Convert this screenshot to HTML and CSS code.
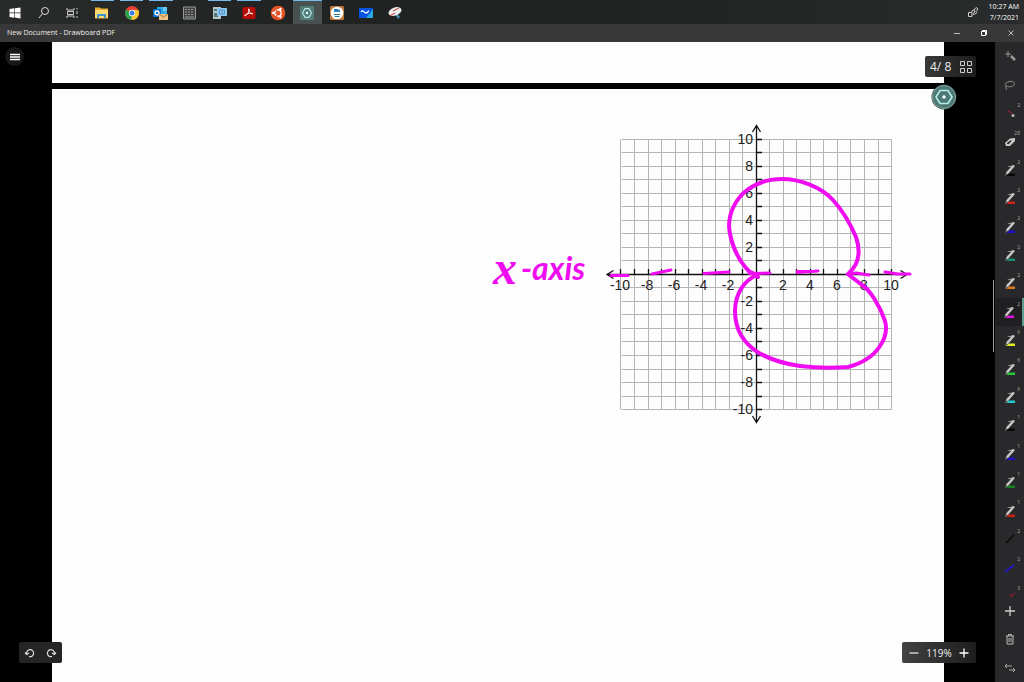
FILE: index.html
```html
<!DOCTYPE html>
<html lang="en">
<head>
<meta charset="utf-8">
<title>New Document - Drawboard PDF</title>
<link rel="stylesheet" href="styles.css">
</head>
<body>
<svg class="defs" aria-hidden="true">
  <symbol id="pen" viewBox="0 0 14 14"><path d="M3 13h9v-2.500H6z" fill="currentColor"/><path d="M4 3.500 11.500 2 6 9.500 2 13 4 8 8 4.500z" fill="#999"/><path d="M11 2.500 4 10.500" stroke="#c8c8c8" stroke-width="2"/></symbol>
</svg>
<header class="taskbar">
  <nav class="apps" aria-label="Taskbar">
    <button class="app" aria-label="Start"><svg viewBox="0 0 16 16"><path d="M2.500 4 7.300 3.300v4.300H2.500zM7.900 3.200 13.500 2.400v5.200H7.900zM2.500 8.200h4.800v4.500l-4.800-.7zM7.900 8.200h5.600v5.200l-5.600-.8z" fill="#fff"/></svg></button>
    <button class="app" aria-label="Search"><svg viewBox="0 0 16 16" fill="none" stroke="#ddd"><circle cx="9" cy="6" r="3.500"/><path d="M6.400 8.500 3 13"/></svg></button>
    <button class="app" aria-label="Task view"><svg viewBox="0 0 16 16" fill="none" stroke="#ccc"><path d="M2 3v2h7V3M2 13v-2h7v2M2.500 6.500h6v3h-6zM12 3v1.500M12 6v3M12 11v2"/></svg></button>
    <button class="app open" aria-label="File Explorer"><svg viewBox="0 0 16 16"><path d="M1 2.500h5l1 1h7v10H1z" fill="#e9ae32"/><path d="M1 5h13v8H1z" fill="#ffdc72"/><path d="M3 13V9h9v4h-2v-2H5v2z" fill="#3f91cf"/></svg></button>
    <button class="app open" aria-label="Chrome"><svg viewBox="0 0 16 16"><circle cx="8" cy="8" r="7" fill="#e64235"/><path d="M8 8 2 4.500A7 7 0 0 0 7.500 15L10.700 9.500z" fill="#2ba24c"/><path d="M8 5h6.300A7 7 0 0 1 7.500 15z" fill="#fcc934"/><circle cx="8" cy="8" r="3.200" fill="#fff"/><circle cx="8" cy="8" r="2.500" fill="#3d7de8"/></svg></button>
    <button class="app open" aria-label="Outlook"><svg viewBox="0 0 16 16"><path d="M4 2h10v8H4z" fill="#35a9e8"/><path d="M10 2h4v4h-4z" fill="#67cdf7"/><path d="M0 4h8v8H0z" fill="#0872c8"/><circle cx="4" cy="8" r="2" fill="none" stroke="#fff" stroke-width="1.300"/><path d="M6 9h9v6H6z" fill="#f3c385"/><path d="m6 9 4.500 3L15 9" fill="none" stroke="#a77945"/></svg></button>
    <button class="app" aria-label="Keyboard"><svg viewBox="0 0 16 16" fill="none" stroke="#999"><path d="M1.500 2h12v12h-12z" fill="#414343"/><path d="M3 4.500h9M3 7h9M3 9.500h9" stroke-dasharray="2 1"/><path d="M3 12h9"/></svg></button>
    <button class="app open" aria-label="Scanner"><svg viewBox="0 0 16 16"><path d="M1 2h8v12H1z" fill="#b5c7c9"/><path d="M2 4h4v2H2zM2 8h4v4H2z" fill="#53777c"/><rect x="5" y="3" width="10" height="8" rx="1" fill="#8dc8ed"/><path d="M7.500 5h5v4h-5zM10 5v4" fill="none" stroke="#5a96cb"/></svg></button>
    <button class="app open" aria-label="Acrobat"><svg viewBox="0 0 16 16"><rect x="1.500" y="2" width="13" height="12" rx="2" fill="#b90b07"/><path d="M7.500 4c2 0 0 5-3.500 7-1.500-.5 3-3.500 7.500-2.500 1.500 1.500-4-.5-4-4.500z" fill="none" stroke="#fff"/></svg></button>
    <button class="app" aria-label="Ubuntu"><svg viewBox="0 0 16 16"><circle cx="8" cy="8" r="7.300" fill="#e65326"/><circle cx="8" cy="8" r="3.200" fill="none" stroke="#fff" stroke-width="1.400" stroke-dasharray="5.700 1"/><circle cx="3.300" cy="8" r="1.200" fill="#fff"/><circle cx="10.400" cy="3.900" r="1.200" fill="#fff"/><circle cx="10.400" cy="12.100" r="1.200" fill="#fff"/></svg></button>
    <button class="app open active" aria-label="Drawboard PDF"><svg viewBox="0 0 16 16"><path d="M1 1h14v14H1z" fill="#527c78"/><path d="m6 3.700h4L12.500 8 10 12.300H6L3.500 8z" fill="none" stroke="#b5e5dc" stroke-width="1.200"/><circle cx="8" cy="8" r="1.300" fill="#dff"/></svg></button>
    <button class="app" aria-label="Camera"><svg viewBox="0 0 16 16"><rect x="1" y="1" width="14" height="14" rx="1.500" fill="#c2773b"/><circle cx="8" cy="8" r="6.300" fill="#fff"/><path d="M5 4h4v1l2-.7v3L9 6.500V7H5z" fill="#2b7fbd"/><path d="M5 9.500h6M5.500 11.500h5" stroke="#2b7895"/></svg></button>
    <button class="app" aria-label="Whiteboard"><svg viewBox="0 0 16 16"><path d="M1 3h14v10H1z" fill="#0654df"/><path d="M15 4v9H8z" fill="#29a9df"/><path d="M3 7c2-3 3 1 5 1s2-2 3-2" fill="none" stroke="#fff" stroke-width="1.300"/></svg></button>
    <button class="app" aria-label="Snip"><svg viewBox="0 0 16 16"><path d="m8 9 3 5 2-2-3-4z" fill="#4690b4"/><ellipse cx="8" cy="6.500" rx="6.800" ry="4" transform="rotate(-20 8 6.500)" fill="#eee"/><path d="m3 11 5-3M6 6l6-3" stroke="#c65b51" stroke-width="1.200"/></svg></button>
  </nav>
  <div class="tray">
    <svg class="ink" viewBox="0 0 12 12" fill="none" stroke="#ccc"><path d="M1.500 6.500h3.500v4H1.500zM4 7l2-3 2 1-2 4M7 4l2-2.500 2 1.500-2 2.500 1 1-2.500 2"/></svg>
    <div class="clock"><time>10:27 AM</time><time>7/7/2021</time></div>
  </div>
</header>
<div class="titlebar">
  <h1 class="title">New Document - Drawboard PDF</h1>
  <div class="window-buttons">
    <button aria-label="Minimize"><svg viewBox="0 0 8 8"><path d="M1 4.500h6"/></svg></button>
    <button aria-label="Restore"><svg viewBox="0 0 8 8"><path d="M1.500 2.500h4v4h-4zM2.500 2V1.500h4v4H6" stroke="#fff"/></svg></button>
    <button aria-label="Close"><svg viewBox="0 0 8 8"><path d="m1.500 1.500 5 5m0-5-5 5"/></svg></button>
  </div>
</div>
<main class="workspace">
  <div class="rail"></div>
  <div class="pages">
    <section class="page page-end"></section>
    <section class="page page-current">
      <svg class="graph" viewBox="480 110 440 320" role="img" aria-label="Polar curve symmetric about the x-axis">
        <path class="grid" transform="translate(.5 .5)" d="M620 139V409M634 139V409M648 139V409M661 139V409M675 139V409M688 139V409M702 139V409M715 139V409M729 139V409M742 139V409M769 139V409M783 139V409M796 139V409M810 139V409M823 139V409M837 139V409M850 139V409M864 139V409M878 139V409M891 139V409M621 139H891M621 152H891M621 166H891M621 179H891M621 193H891M621 206H891M621 220H891M621 233H891M621 247H891M621 260H891M621 287H891M621 301H891M621 314H891M621 328H891M621 341H891M621 355H891M621 369H891M621 382H891M621 396H891M621 409H891"/>
        <path class="axis" d="M607 274.500H907M756.500 125V423M752.500 132l4-6.500 4 6.500M752.500 416l4 6.500 4-6.500M613.500 270.500l-6.500 4 6.500 4M900.500 270.500l6.500 4-6.500 4M620.500 269v5M634.500 269v5M648.500 269v5M661.500 269v5M675.500 269v5M688.500 269v5M702.500 269v5M715.500 269v5M729.500 269v5M742.500 269v5M769.500 269v5M783.500 269v5M796.500 269v5M810.500 269v5M823.500 269v5M837.500 269v5M850.500 269v5M864.500 269v5M878.500 269v5M891.500 269v5M757 139.500h5M757 152.500h5M757 166.500h5M757 179.500h5M757 193.500h5M757 206.500h5M757 220.500h5M757 233.500h5M757 247.500h5M757 260.500h5M757 287.500h5M757 301.500h5M757 314.500h5M757 328.500h5M757 341.500h5M757 355.500h5M757 369.500h5M757 382.500h5M757 396.500h5M757 409.500h5"/>
        <g class="labels-y"><text x="753" y="144">10</text><text x="753" y="171">8</text><text x="753" y="198">6</text><text x="753" y="225">4</text><text x="753" y="252">2</text><text x="753" y="306">-2</text><text x="753" y="333">-4</text><text x="753" y="360">-6</text><text x="753" y="387">-8</text><text x="753" y="414">-10</text></g>
        <g class="labels-x"><text x="620" y="290">-10</text><text x="647" y="290">-8</text><text x="674" y="290">-6</text><text x="701" y="290">-4</text><text x="728" y="290">-2</text><text x="783" y="290">2</text><text x="810" y="290">4</text><text x="837" y="290">6</text><text x="864" y="290">8</text><text x="891" y="290">10</text></g>
        <path class="stroke" d="M758 277C755 272 751 275 746 268C737 258 730 241 729 226C729 210 738 197 747 190C758 182 770 179 782 179C800 179 821 187 833 200C842 210 850 223 856 237C861 252 859 264 849 273"/>
        <path class="stroke" d="M757 275C745 280 735 293 735 311C735 332 746 345 759 353C773 361 786 364 800 366C816 368 834 368 848 367C863 363 873 357 880 346C886 337 887 328 885 321C880 306 870 290 862 285L849 275"/>
        <path class="stroke dash" d="M611 275.500 628 275.500M652 274 671 270M704 273.500 729 272M749 273.500 770 273M797 272.500 818 271M797 271.500h16M847 274 856 273 869 275M885 272 898 274H910"/>
        <text class="note letter" x="493" y="284">x</text>
        <text class="note" x="521" y="280">-axis</text>
      </svg>
    </section>
  </div>
  <div class="gutter"></div>
  <aside class="tools" aria-label="Tools">
    <div class="tool-view"><div class="tool-list">
      <button class="tool" aria-label="Laser"><svg viewBox="0 0 14 14" fill="none" stroke="#999"><path d="M5 2v6M2 5h6"/><path d="m8 7 4 4" stroke-width="2.500"/></svg></button>
      <button class="tool" aria-label="Lasso"><svg viewBox="0 0 14 14" fill="none" stroke="#888"><path d="M4 9C1 8 2 4 6 3.500s7 1 5 3.500-6 2-7 1-2 2 0 4"/></svg></button>
      <button class="tool" aria-label="Pointer"><svg viewBox="0 0 14 14"><path d="m5 5 4 2" stroke="#b32038"/><circle cx="10" cy="9.500" r="1.500" fill="#bbb"/></svg><span>2</span></button>
      <button class="tool" aria-label="Eraser"><svg viewBox="0 0 14 14"><path d="M2 9 7 4.500 12 4v3l-5 5H3z" fill="#ccc"/><path d="m4 9 3-2.500h2L6 10H4z" fill="#333"/></svg><span>28</span></button>
      <button class="tool black" aria-label="Black pen"><svg><use href="#pen"/></svg><span>2</span></button>
      <button class="tool red" aria-label="Red pen"><svg><use href="#pen"/></svg><span>2</span></button>
      <button class="tool blue" aria-label="Blue pen"><svg><use href="#pen"/></svg><span>2</span></button>
      <button class="tool teal" aria-label="Teal pen"><svg><use href="#pen"/></svg><span>2</span></button>
      <button class="tool orange" aria-label="Orange pen"><svg><use href="#pen"/></svg><span>2</span></button>
      <button class="tool magenta selected" aria-label="Magenta pen"><svg><use href="#pen"/></svg><span>2</span></button>
      <button class="tool yellow" aria-label="Yellow highlighter"><svg><use href="#pen"/></svg><span>6</span></button>
      <button class="tool lime" aria-label="Green highlighter"><svg><use href="#pen"/></svg><span>6</span></button>
      <button class="tool cyan" aria-label="Cyan highlighter"><svg><use href="#pen"/></svg><span>6</span></button>
      <button class="tool black" aria-label="Thin black pen"><svg><use href="#pen"/></svg><span>1</span></button>
      <button class="tool blue" aria-label="Thin blue pen"><svg><use href="#pen"/></svg><span>1</span></button>
      <button class="tool green" aria-label="Thin green pen"><svg><use href="#pen"/></svg><span>1</span></button>
      <button class="tool red" aria-label="Thin red pen"><svg><use href="#pen"/></svg><span>1</span></button>
      <button class="tool" aria-label="Black line"><svg viewBox="0 0 14 14"><path d="m3 11 8-8" stroke="#090909" stroke-width="1.500"/></svg><span>2</span></button>
      <button class="tool" aria-label="Blue line"><svg viewBox="0 0 14 14"><path d="m2 12 9-7" stroke="#2418c4" stroke-width="2"/></svg><span>2</span></button>
      <button class="tool" aria-label="Red line"><svg viewBox="0 0 14 14"><path d="m6 9 6-5M7 5l3 4" stroke="#a51c2b"/></svg><span>3</span></button>
    </div></div>
    <div class="tool-actions">
      <button class="tool" aria-label="Add tool"><svg viewBox="0 0 14 14"><path d="M7 2v10M2 7h10" stroke="#ccc" stroke-width="1.300"/></svg></button>
      <button class="tool" aria-label="Delete"><svg viewBox="0 0 14 14" fill="none" stroke="#bbb"><path d="M3 4h8M5.500 4V2.500h3V4M4 4v8h6V4M6 6v4M8 6v4"/></svg></button>
      <button class="tool" aria-label="Swap side"><svg viewBox="0 0 14 14" fill="none" stroke="#aaa"><path d="M4 3 2 5l2 2M2 5h7M10 7l2 2-2 2M12 9H6"/></svg></button>
    </div>
  </aside>
  <button class="menu" aria-label="Menu"><svg viewBox="0 0 12 12"><path d="M1 3.500h10M1 6h10M1 8.500h10" stroke="#fff" stroke-width="1.400"/></svg></button>
  <div class="panel page-count"><span>4/ 8</span><button aria-label="Page overview"><svg viewBox="0 0 14 14" fill="none" stroke="#ccc"><path d="M1.500 1.500h4v4h-4zM8.500 1.500h4v4h-4zM1.500 8.500h4v4h-4zM8.500 8.500h4v4h-4z"/></svg></button></div>
  <button class="radial" aria-label="Tool wheel"><svg viewBox="0 0 26 26"><circle cx="13" cy="13" r="12.500" fill="#27433f"/><circle cx="13" cy="13" r="11.500" fill="#4c7874" stroke="#8aa5a0"/><path d="m9 6.500h8l4 6.500-4 6.500H9L5 13z" fill="none" stroke="#b9eee7" stroke-width="1.600"/><circle cx="13" cy="13" r="1.800" fill="#fff"/></svg></button>
  <div class="panel history">
    <button aria-label="Undo"><svg viewBox="0 0 12 12" fill="none" stroke="#ddd" stroke-width="1.200"><path d="M5 9.500A3.500 3.500 0 1 0 2.700 7M1 5.500 2.700 7.500 5 6"/></svg></button>
    <button aria-label="Redo"><svg viewBox="0 0 12 12" fill="none" stroke="#ddd" stroke-width="1.200"><path d="M7 9.500A3.500 3.500 0 1 1 9.300 7M11 5.500 9.300 7.500 7 6"/></svg></button>
  </div>
  <div class="panel zoom">
    <button aria-label="Zoom out"><svg viewBox="0 0 12 12"><path d="M1.500 6h9" stroke="#eee" stroke-width="1.200"/></svg></button>
    <span>119%</span>
    <button aria-label="Zoom in"><svg viewBox="0 0 12 12"><path d="M1.500 6h9M6 1.500v9" stroke="#fff" stroke-width="1.300"/></svg></button>
  </div>
  <div class="scroll-thumb"></div>
</main>
</body>
</html>
```
FILE: styles.css
```css
* { box-sizing: border-box; }
body {
  margin: 0;
  height: 100vh;
  display: flex;
  flex-direction: column;
  overflow: hidden;
  background: #000;
  color: #eee;
  font-family: "Open Sans", "Noto Sans", sans-serif;
}
button {
  display: flex;
  align-items: center;
  justify-content: center;
  margin: 0;
  padding: 0;
  border: 0;
  background: none;
  color: inherit;
  font: inherit;
}
svg { display: block; flex: none; }
.defs { position: absolute; width: 0; height: 0; }

.taskbar {
  display: flex;
  justify-content: space-between;
  height: 24px;
  flex: none;
  background: linear-gradient(90deg, #292b2b, #202322 30%, #202322 60%, #292b2c);
}
.apps { display: grid; grid-template-columns: repeat(14, 1fr); width: 410px; }
.app { border-top: 1px solid transparent; }
.app svg { width: 16px; height: 16px; }
.app.open { border-top-color: #76b9ed; margin: 0 3px; }
.app.active { background: #485050; margin: 0; }
.tray { display: flex; align-items: center; gap: 10px; padding-right: 5px; }
.ink { width: 12px; height: 12px; }
.clock { display: flex; flex-direction: column; text-align: right; font-size: 7px; line-height: 11px; color: #fff; }

.titlebar {
  display: flex;
  justify-content: space-between;
  align-items: center;
  height: 18px;
  flex: none;
  padding-left: 7px;
  background: #383838;
}
.title { margin: 0; font-size: 7px; font-weight: 400; line-height: 12px; }
.window-buttons { display: flex; }
.window-buttons button { width: 27px; height: 18px; }
.window-buttons svg { width: 8px; height: 8px; fill: none; stroke: #bbb; }

.workspace { position: relative; display: flex; flex: 1; min-height: 0; }
.rail { width: 52px; }
.pages { display: flex; flex-direction: column; gap: 6px; flex: 1; }
.page { background: #fdfdfd; }
.page-end { height: 41px; }
.page-current { display: flex; justify-content: flex-end; align-items: flex-start; flex: 1; padding: 21px 24px 0 0; }
.gutter { width: 51px; }

.graph { width: 440px; height: 320px; }
.grid { fill: none; stroke: #b4b4b4; }
.axis { fill: none; stroke: #111; stroke-width: 1.300; }
.labels-x, .labels-y { font-family: "Liberation Sans", Arial, sans-serif; font-size: 14px; fill: #222; }
.labels-x { text-anchor: middle; }
.labels-y { text-anchor: end; }
.stroke { fill: none; stroke: #f00cf0; stroke-width: 4; stroke-linecap: round; stroke-linejoin: round; }
.dash { stroke-width: 3; }
.note { font-family: Lato, sans-serif; font-size: 32px; font-style: italic; font-weight: 700; fill: #f00cf0; }
.letter { font-family: "Liberation Serif", serif; font-size: 48px; }

.tools { display: flex; flex-direction: column; width: 29px; background: #29292b; }
.tool-view { flex: 1; min-height: 0; overflow: hidden; }
.tool-list { display: grid; grid-template-rows: repeat(20, 1fr); height: 568px; }
.tool { position: relative; width: 29px; }
.tool svg { width: 14px; height: 14px; }
.tool span { position: absolute; top: 3px; right: 4px; font-size: 5px; line-height: 6px; color: #aaa; }
.tool-actions { display: grid; grid-template-rows: repeat(3, 1fr); height: 85px; flex: none; }
.selected { background: #202022; border-right: 2px solid #5f9c91; }
.selected span { right: 2px; }
.black { color: #080808; }
.red { color: #d02218; }
.blue { color: #2010c8; }
.teal { color: #168c70; }
.orange { color: #dc7923; }
.magenta { color: #e014e0; }
.yellow { color: #e4ed22; }
.lime { color: #24c936; }
.cyan { color: #20cbd0; }
.green { color: #168326; }

.menu { position: absolute; top: 5px; left: 5px; width: 19px; height: 19px; border-radius: 50%; background: #181818; }
.menu svg { width: 12px; height: 12px; }
.panel { position: absolute; display: flex; align-items: center; height: 21px; border-radius: 2px; background: #252525; }
.page-count { top: 14px; right: 48px; width: 51px; padding: 0 3px 0 5px; justify-content: space-between; font-size: 12px; line-height: 16px; background: linear-gradient(90deg, #383838, #1d1d1d); }
.page-count svg { width: 14px; height: 14px; }
.radial { position: absolute; top: 42px; right: 67px; width: 26px; height: 26px; }
.radial svg { width: 26px; height: 26px; }
.history { bottom: 19px; left: 19px; width: 43px; }
.history button, .zoom button { flex: 1; height: 21px; }
.history svg, .zoom svg { width: 12px; height: 12px; }
.zoom { bottom: 19px; right: 48px; width: 74px; font-size: 10px; background: linear-gradient(90deg, #424242, #1d1d1d); }
.scroll-thumb { position: absolute; top: 238px; right: 30px; width: 1px; height: 72px; background: #999; }
```
